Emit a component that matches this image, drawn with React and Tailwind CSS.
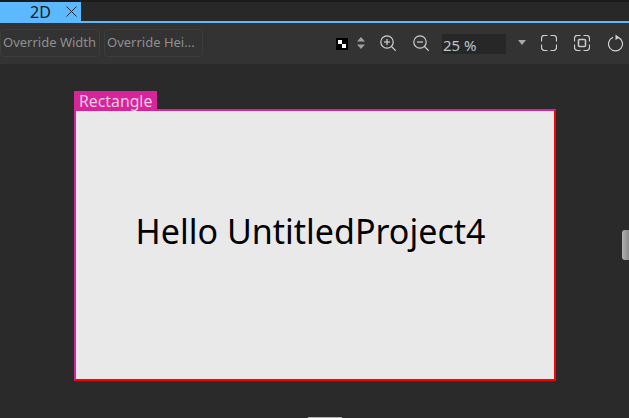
import React from 'react';

const iconClass = 'fill-none stroke-[#d0d0d0] stroke-[1.2]';

function ZoomIcon({ minus }) {
  return (
    <svg width="16" height="16" viewBox="0 0 16 16" className={iconClass}>
      <circle cx="7" cy="7" r="6.2" />
      <path d="M11.5 11.5 L15.8 15.8" />
      <path d="M4 7 H10" />
      {!minus && <path d="M7 4 V10" />}
    </svg>
  );
}

function CornerFrame({ inner }) {
  return (
    <svg width="16" height="16" viewBox="0 0 16 16" className={iconClass}>
      <path d="M6.5 .5 H3.5 Q.5 .5 .5 3.5 V6.5 M9.5 .5 H12.5 Q15.5 .5 15.5 3.5 V6.5 M.5 9.5 V12.5 Q.5 15.5 3.5 15.5 H6.5 M15.5 9.5 V12.5 Q15.5 15.5 12.5 15.5 H9.5" />
      {inner && <rect x="4.5" y="4.5" width="7" height="7" rx="1" className="stroke-[#c8c8c8] stroke-[1.6]" />}
    </svg>
  );
}

export default function App() {
  return (
    <div className="w-[629px] h-[418px] overflow-hidden flex flex-col bg-[#2a2a2a] font-['Noto_Sans',sans-serif]">
      {/* Tab strip */}
      <div className="h-[21px] shrink-0 border-t-2 border-[#1a1a1a] bg-[#282828] flex">
        <div className="w-[81px] bg-[#5cb8ff] flex items-center text-[#0f1a24] text-[16px] leading-none">
          <span className="ml-[30px]">2D</span>
          <svg width="11" height="11" viewBox="0 0 11 11" className="ml-[15px] stroke-[#1a2a3a] fill-none">
            <path d="M.5 .5 L10.5 10.5 M10.5 .5 L.5 10.5" />
          </svg>
        </div>
      </div>
      <div className="h-[2px] shrink-0 bg-[#5cb8ff]" />

      {/* Toolbar */}
      <div className="h-[41px] shrink-0 bg-[#333333] flex items-center pb-[2px]">
        <div className="w-[100px] h-[28px] border border-[#3d3d3d] rounded-[4px] flex items-center pl-[2px] text-[#8f8f8f] text-[13px] whitespace-nowrap">
          Override Width
        </div>
        <div className="ml-[4px] w-[99px] h-[28px] border border-[#3d3d3d] rounded-[4px] flex items-center pl-[2px] text-[#8f8f8f] text-[13px] whitespace-nowrap">
          Override Hei...
        </div>

        <div className="ml-[133px] mt-[2px] w-[12px] h-[12px] bg-black relative">
          <div className="absolute left-[2px] top-[2px] w-[4px] h-[4px] bg-white" />
          <div className="absolute left-[6px] top-[6px] w-[4px] h-[4px] bg-white" />
        </div>
        <svg width="8" height="12" viewBox="0 0 8 12" className="ml-[9px] fill-[#a0a0a0]">
          <path d="M4 0 L8 4.5 H0 Z M4 12 L0 7.5 H8 Z" />
        </svg>
        <div className="ml-[15px] flex">
          <ZoomIcon />
        </div>
        <div className="ml-[17px] flex">
          <ZoomIcon minus />
        </div>
        <div className="ml-[13px] w-[64px] h-[20px] mt-[2px] bg-[#272727] flex items-center pl-[1px] pt-[3px] text-[#b9c6d2] text-[15px] leading-none">
          25 %
        </div>
        <svg width="8" height="5" viewBox="0 0 8 5" className="ml-[12px] fill-[#a8a8a8]">
          <path d="M0 0 H8 L4 5 Z" />
        </svg>
        <div className="ml-[15px] flex">
          <CornerFrame />
        </div>
        <div className="ml-[17px] flex">
          <CornerFrame inner />
        </div>
        <svg width="16" height="18" viewBox="0 0 16 18" className={`ml-[18px] ${iconClass}`}>
          <path d="M10.5 3.6 A7 7 0 1 1 5 3.4" />
          <path d="M7.5 .5 L11.5 3.5 L7.5 6 Z" className="fill-[#d0d0d0] stroke-none" />
        </svg>
      </div>

      {/* Canvas */}
      <div className="relative flex-1 pl-[74px] pt-[45px]">
        <div className="relative w-[482px] h-[272px] border-2 border-t-[#d6249b] border-l-[#d6249b] border-r-[#ff0000] border-b-[#ff0000] bg-[#e9e9e9] flex items-center justify-center pb-[28px] pr-[9px] text-black text-[34px] leading-none whitespace-nowrap">
          Hello UntitledProject4
          <div className="absolute left-[-2px] top-[-20px] w-[83px] h-[18px] bg-[#d6249b] text-[#eccbe2] text-[15.8px] leading-[20px] pl-[5px]">
            Rectangle
          </div>
        </div>
        <div className="absolute left-[622px] top-[166px] w-[7px] h-[30px] rounded-l-[3px] bg-gradient-to-r from-[#b0b0b0] to-[#8a8a8a]" />
        <div className="absolute left-[308px] top-[353px] w-[34px] h-[1px] bg-[#b0b0b0]" />
      </div>
    </div>
  );
}
